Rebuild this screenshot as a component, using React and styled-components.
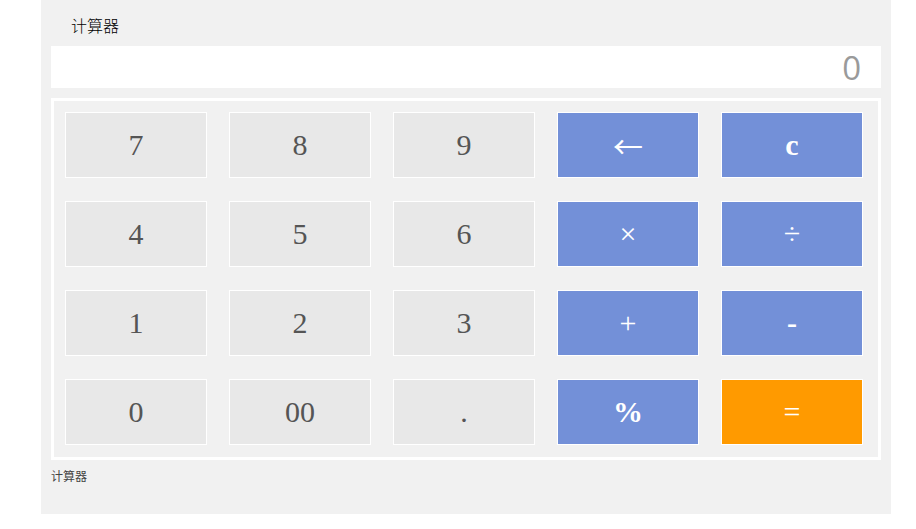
import React from "react";
import styled, { createGlobalStyle } from "styled-components";

const Global = createGlobalStyle`
  html, body { margin: 0; padding: 0; background: #ffffff; }
  body { font-family: "Liberation Sans", "Noto Sans CJK SC", sans-serif; }
`;

const Shell = styled.div`
  margin-left: 41px;
  width: 850px;
  height: 514px;
  background: #f1f1f1;
  box-sizing: border-box;
  padding: 14px 10px 0 10px;
  display: flex;
  flex-direction: column;
`;

const Title = styled.div`
  font-family: "Noto Sans CJK SC", sans-serif;
  font-size: 16px;
  font-weight: 300;
  line-height: 22px;
  color: #000;
  padding-left: 20px;
  margin-bottom: 10px;
`;

const Display = styled.div`
  height: 42px;
  background: #ffffff;
  display: flex;
  align-items: center;
  justify-content: flex-end;
  padding-right: 20px;
  font-family: "Open Sans", "Noto Sans", sans-serif;
  font-size: 33px;
  color: #9a9a9a;
  margin-bottom: 10px;
`;

const Pad = styled.div`
  border: 3px solid #ffffff;
  background: #f1f1f1;
  padding: 11px 11px 12px 11px;
  display: grid;
  grid-template-columns: repeat(5, 142px);
  grid-auto-rows: 66px;
  column-gap: 22px;
  row-gap: 23px;
`;

const Key = styled.div`
  box-sizing: border-box;
  border: 1px solid #ffffff;
  background: ${(p) => (p.$kind === "eq" ? "#ff9a00" : p.$kind === "op" ? "#7390d8" : "#e8e8e8")};
  color: ${(p) => (p.$kind === "num" ? "#555555" : "#ffffff")};
  font-family: ${(p) =>
    p.$wide ? '"Noto Sans CJK SC", "DejaVu Sans", sans-serif' : '"Liberation Serif", "DejaVu Serif", serif'};
  font-size: 30px;
  font-weight: ${(p) => (p.$bold ? 700 : 400)};
  display: flex;
  align-items: center;
  justify-content: center;
  user-select: none;
`;

const Footer = styled.div`
  font-family: "Noto Sans CJK SC", sans-serif;
  font-size: 12px;
  line-height: 16px;
  color: #444;
  margin-top: 8px;
`;

const keys = [
  { l: "7", k: "num" }, { l: "8", k: "num" }, { l: "9", k: "num" },
  { l: "←", k: "op", wide: true }, { l: "c", k: "op", bold: true },
  { l: "4", k: "num" }, { l: "5", k: "num" }, { l: "6", k: "num" },
  { l: "×", k: "op" }, { l: "÷", k: "op" },
  { l: "1", k: "num" }, { l: "2", k: "num" }, { l: "3", k: "num" },
  { l: "+", k: "op" }, { l: "-", k: "op", bold: true },
  { l: "0", k: "num" }, { l: "00", k: "num" }, { l: ".", k: "num" },
  { l: "%", k: "op", bold: true }, { l: "=", k: "eq" },
];

export default function App() {
  return (
    <>
      <Global />
      <Shell>
        <Title>计算器</Title>
        <Display>0</Display>
        <Pad>
          {keys.map((key) => (
            <Key key={key.l} $kind={key.k} $bold={key.bold} $wide={key.wide}>
              {key.l}
            </Key>
          ))}
        </Pad>
        <Footer>计算器</Footer>
      </Shell>
    </>
  );
}
